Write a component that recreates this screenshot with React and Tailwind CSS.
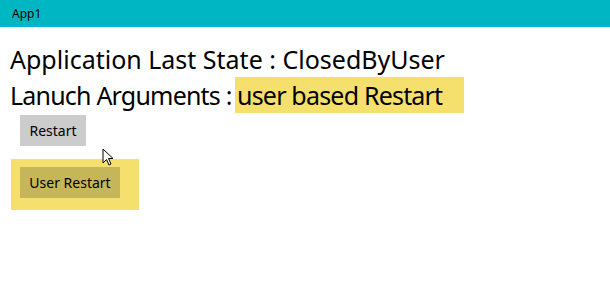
import React from "react";

const font = { fontFamily: '"Noto Sans", "Open Sans", sans-serif' };

const Cursor = () => (
  <svg
    className="absolute left-[102px] top-[148px]"
    width="14"
    height="20"
    viewBox="0 0 14 20"
  >
    <path
      d="M1 1 L1 15 L4.5 11.5 L7 17 L9 16 L6.5 10.5 L11 10.5 Z"
      fill="#fff"
      stroke="#000"
      strokeWidth="1"
      strokeLinejoin="round"
    />
  </svg>
);

const App = () => {
  return (
    <div className="relative w-[610px] h-[288px] bg-white text-black" style={font}>
      <div className="h-[27px] bg-[#00b6c3] flex items-center pl-[12px] text-[12px]">
        App1
      </div>
      <div className="pl-[10px] pt-[14px]">
        <div className="text-[25px] leading-[36px]">
          Application Last State : ClosedByUser
        </div>
        <div className="text-[25px] leading-[36px] flex">
          <span className="w-[225px] tracking-[-0.8px]">Lanuch Arguments :</span>
          <span className="bg-[#f5e06e] w-[229px] pl-[2px] tracking-[-0.8px]">
            user based Restart
          </span>
        </div>
        <div className="mt-[2px] ml-[10px]">
          <button className="w-[66px] h-[31px] bg-[#cccccc] text-[14px]">
            Restart
          </button>
        </div>
        <div className="mt-[13px] ml-[1px] w-[128px] h-[51px] bg-[#f5e06e] pt-[8px] pl-[9px]">
          <button className="w-[100px] h-[31px] bg-[#c6b65a] text-[14px]">
            User Restart
          </button>
        </div>
      </div>
      <Cursor />
    </div>
  );
};

export default App;
